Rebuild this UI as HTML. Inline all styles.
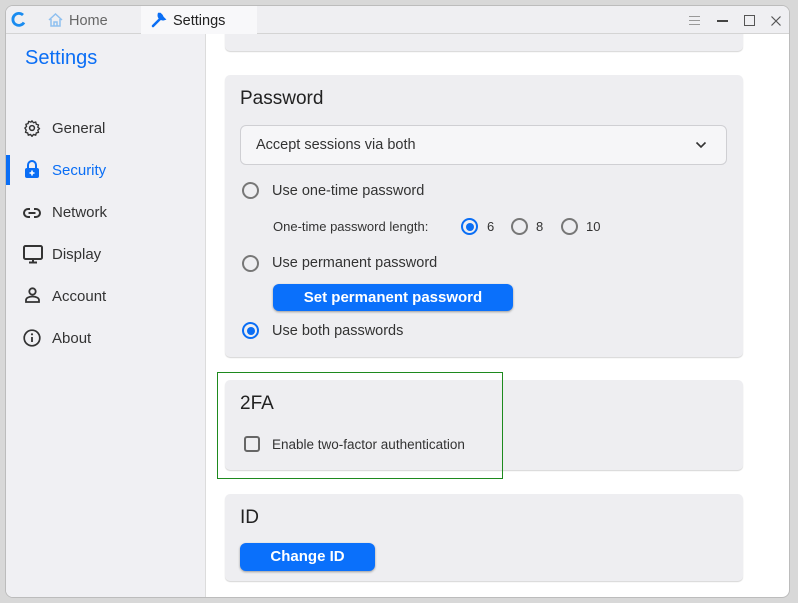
<!DOCTYPE html>
<html><head><meta charset="utf-8"><style>
*{box-sizing:border-box;margin:0;padding:0}
body{width:798px;height:603px;background:#d8d8d8;font-family:"Liberation Sans",sans-serif;position:relative;overflow:hidden;color:#222}
.win{position:absolute;left:5px;top:5px;width:785px;height:593px;background:#fff;border:1px solid #bcbcbc;border-radius:8px;overflow:hidden}
.tb{position:absolute;left:0;top:0;width:100%;height:28px;background:#efeff2;border-bottom:1px solid #d4d4d4;z-index:5}
.side{position:absolute;left:0;top:28px;width:200px;bottom:0;background:#f0f0f3;border-right:1px solid #dcdcdc}
.abs{position:absolute}
.card{position:absolute;left:219px;width:518px;background:#eeeef1;border-radius:5px;box-shadow:0 1px 1px #d6d6d6}
.h{position:absolute;left:15px;font-size:19px;color:#222}
.t{position:absolute;font-size:14.5px;color:#333;white-space:nowrap}
.r{position:absolute;width:17px;height:17px;border:2px solid #777;border-radius:50%}
.r.on{border-color:#0a6ef5}
.r.on:after{content:"";position:absolute;left:2.5px;top:2.5px;width:8px;height:8px;border-radius:50%;background:#0a6ef5}
.btn{position:absolute;background:#0a70fb;color:#fff;font-weight:bold;font-size:15px;text-align:center;border-radius:6px;box-shadow:0 1px 2px #999}
.nav{position:absolute;left:46px;font-size:15px;color:#333}
</style></head><body>
<div class="win">
<div class="tb">
 <svg class="abs" style="left:4px;top:5px" width="17" height="17" viewBox="0 0 17 17"><path d="M13 4A6 6 0 1 0 14 11.5" fill="none" stroke="#1a8cf0" stroke-width="2.8"/></svg>
 <svg class="abs" style="left:42px;top:7px" width="15" height="14" viewBox="0 0 15 14"><path d="M1 7L7.5 1L14 7M3 6v7h9V6M6 13V9h3v4" fill="none" stroke="#8fc0f0" stroke-width="1.5"/></svg>
 <div class="t" style="left:63px;top:7px;color:#666">Home</div>
 <div class="abs" style="left:135px;top:0;width:116px;height:28px;background:#f8f8fa"></div>
 <svg class="abs" style="left:144px;top:5px" width="18" height="18" viewBox="0 0 18 18"><path d="M3 15L10 8M9 3a4 4 0 0 0 5 5l-1.5-1.5-1-2L10 3z" fill="#0a6ef5" stroke="#0a6ef5" stroke-width="2.6" stroke-linecap="round"/></svg>
 <div class="t" style="left:167px;top:7px;color:#222">Settings</div>
 <div class="abs" style="left:683px;top:10px;width:11px;height:1px;background:#999"></div>
 <div class="abs" style="left:683px;top:14px;width:11px;height:1px;background:#999"></div>
 <div class="abs" style="left:683px;top:18px;width:11px;height:1px;background:#999"></div>
 <div class="abs" style="left:711px;top:14px;width:11px;height:1.5px;background:#444"></div>
 <div class="abs" style="left:738px;top:9px;width:11px;height:11px;border:1.3px solid #555"></div>
 <svg class="abs" style="left:764px;top:9px" width="12" height="12" viewBox="0 0 12 12"><path d="M1.5 1.5l9 9M10.5 1.5l-9 9" stroke="#555" stroke-width="1.2"/></svg>
</div>
<div class="side">
 <div class="abs" style="left:19px;top:13px;font-size:20px;color:#0a6ef5">Settings</div>
 <svg class="abs" style="left:17px;top:85px" width="18" height="18" viewBox="0 0 24 24"><circle cx="12" cy="12" r="3.2" fill="none" stroke="#333" stroke-width="2"/><path d="M12 2.5l2 2.5 3-1 .7 3 3 .8-1 3 2.3 2-2.3 2 1 3-3 .8-.7 3-3-1-2 2.5-2-2.5-3 1-.7-3-3-.8 1-3L2.5 12l2.3-2-1-3 3-.8.7-3 3 1z" fill="none" stroke="#333" stroke-width="1.8" stroke-linejoin="round"/></svg>
 <div class="nav" style="top:86px">General</div>
 <div class="abs" style="left:0;top:121px;width:4px;height:30px;background:#0a6ef5"></div>
 <svg class="abs" style="left:18px;top:126px" width="16" height="19" viewBox="0 0 16 19"><path d="M4 8V5a4 4 0 0 1 8 0v3" fill="none" stroke="#0a6ef5" stroke-width="2"/><rect x="1" y="8" width="14" height="10" rx="2" fill="#0a6ef5"/><path d="M8 10.5v5M5.5 13h5" stroke="#fff" stroke-width="1.6"/></svg>
 <div class="nav" style="top:128px;color:#0a6ef5">Security</div>
 <svg class="abs" style="left:17px;top:173px" width="18" height="12" viewBox="0 0 18 12"><path d="M7 2H5a4 4 0 0 0 0 8h2M11 2h2a4 4 0 0 1 0 8h-2M5.5 6h7" fill="none" stroke="#333" stroke-width="2"/></svg>
 <div class="nav" style="top:170px">Network</div>
 <svg class="abs" style="left:17px;top:211px" width="20" height="19" viewBox="0 0 20 19"><rect x="1" y="1" width="18" height="13" rx="1.5" fill="none" stroke="#333" stroke-width="2"/><path d="M10 14v3M6 17.5h8" stroke="#333" stroke-width="2"/></svg>
 <div class="nav" style="top:212px">Display</div>
 <svg class="abs" style="left:19px;top:253px" width="15" height="16" viewBox="0 0 15 16"><circle cx="7.5" cy="4.5" r="3.2" fill="none" stroke="#333" stroke-width="1.8"/><path d="M1 15v-2c0-2 3-3.5 6.5-3.5S14 11 14 13v2z" fill="none" stroke="#333" stroke-width="1.8"/></svg>
 <div class="nav" style="top:254px">Account</div>
 <svg class="abs" style="left:17px;top:295px" width="18" height="18" viewBox="0 0 18 18"><circle cx="9" cy="9" r="7.8" fill="none" stroke="#333" stroke-width="1.7"/><path d="M9 8v5" stroke="#333" stroke-width="1.8"/><circle cx="9" cy="5.3" r="1.1" fill="#333"/></svg>
 <div class="nav" style="top:296px">About</div>
</div>
<div class="card" style="top:-10px;height:55px"></div>
<div class="card" style="top:69px;height:282px">
 <div class="h" style="top:13px">Password</div>
 <div class="abs" style="left:15px;top:50px;width:487px;height:40px;background:#f6f6f8;border:1px solid #cfcfd3;border-radius:6px"></div>
 <div class="t" style="left:31px;top:62px">Accept sessions via both</div>
 <svg class="abs" style="left:470px;top:66px" width="12" height="8" viewBox="0 0 12 8"><path d="M1.5 1.5L6 6l4.5-4.5" fill="none" stroke="#333" stroke-width="1.6"/></svg>
 <div class="r" style="left:17px;top:107px"></div><div class="t" style="left:47px;top:108px">Use one-time password</div>
 <div class="t" style="left:48px;top:144px;font-size:13px">One-time password length:</div>
 <div class="r on" style="left:236px;top:143px"></div><div class="t" style="left:262px;top:144px;font-size:13px">6</div>
 <div class="r" style="left:286px;top:143px"></div><div class="t" style="left:311px;top:144px;font-size:13px">8</div>
 <div class="r" style="left:336px;top:143px"></div><div class="t" style="left:361px;top:144px;font-size:13px">10</div>
 <div class="r" style="left:17px;top:180px"></div><div class="t" style="left:47px;top:180px">Use permanent password</div>
 <div class="btn" style="left:48px;top:209px;width:240px;height:27px;line-height:27px">Set permanent password</div>
 <div class="r on" style="left:17px;top:247px"></div><div class="t" style="left:47px;top:248px">Use both passwords</div>
</div>
<div class="card" style="top:374px;height:90px">
 <div class="h" style="top:13px">2FA</div>
 <div class="abs" style="left:19px;top:56px;width:16px;height:16px;border:2px solid #666;border-radius:3px"></div>
 <div class="t" style="left:47px;top:57px;font-size:13.5px">Enable two-factor authentication</div>
</div>
<div class="abs" style="left:211px;top:366px;width:286px;height:107px;border:1.5px solid #1e8a1e"></div>
<div class="card" style="top:488px;height:87px">
 <div class="h" style="top:13px">ID</div>
 <div class="btn" style="left:15px;top:49px;width:135px;height:28px;line-height:28px">Change ID</div>
</div>
</div>
</body></html>
